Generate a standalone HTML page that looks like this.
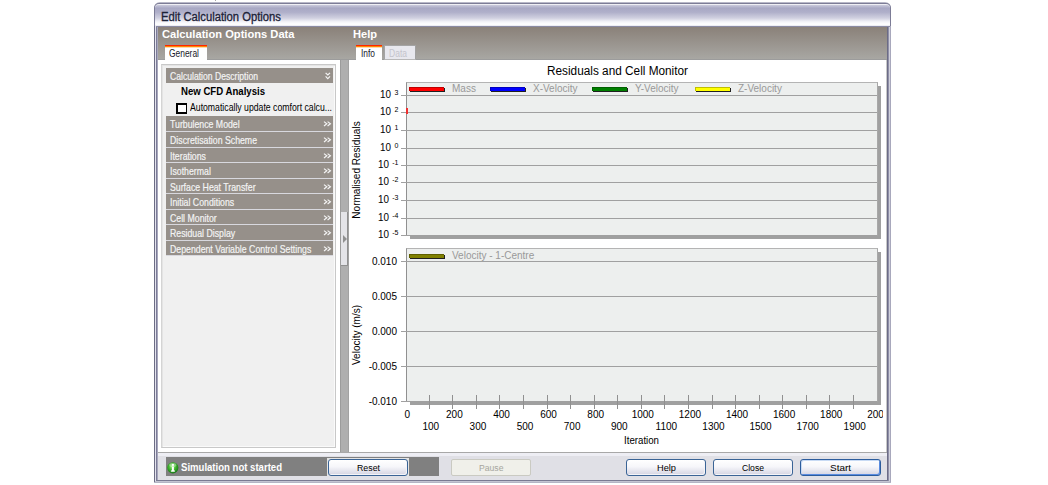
<!DOCTYPE html>
<html><head><meta charset="utf-8"><style>
html,body{margin:0;padding:0;width:1048px;height:485px;overflow:hidden;background:#ffffff;position:relative;font-family:'Liberation Sans', sans-serif;}
</style></head><body>
<div style="position:absolute;left:215px;top:0px;width:1px;height:1px;background:#a8a8a8;"></div>
<div style="position:absolute;left:154px;top:2px;width:737px;height:481px;background:#b8b8c8;border-radius:6px 6px 0 0;"></div>
<div style="position:absolute;left:154px;top:3px;width:737px;height:480px;background:#7c7c96;border-radius:5px 5px 0 0;"></div>
<div style="position:absolute;left:155px;top:4px;width:735px;height:478px;background:#eeeef4;border-radius:4px 4px 0 0;"></div>
<div style="position:absolute;left:155px;top:5px;width:735px;height:21px;background:linear-gradient(#cacadc,#a8a8c4 15%,#b0b0ca 35%,#d0d0e0 62%,#f4f4f8 80%,#ffffff 92%,#e6e6ee);border-radius:3px 3px 0 0;"></div>
<div style="position:absolute;left:155px;top:26px;width:735px;height:1px;background:#8a8aa2;"></div>
<div style="position:absolute;left:154px;top:26px;width:1px;height:456px;background:#6c6c84;"></div>
<div style="position:absolute;left:155px;top:26px;width:1px;height:455px;background:#e4e4ee;"></div>
<div style="position:absolute;left:156px;top:27px;width:1px;height:454px;background:#7c7c98;"></div>
<div style="position:absolute;left:157px;top:27px;width:1px;height:453px;background:#a8a8bc;"></div>
<div style="position:absolute;left:887px;top:27px;width:1px;height:454px;background:#6c6c86;"></div>
<div style="position:absolute;left:888px;top:27px;width:1px;height:454px;background:#9090a8;"></div>
<div style="position:absolute;left:889px;top:27px;width:1px;height:455px;background:#d0d0dc;"></div>
<div style="position:absolute;left:890px;top:26px;width:1px;height:456px;background:#a8a8bc;"></div>
<div style="position:absolute;left:158px;top:456px;width:729px;height:24px;background:#e0e0e6;"></div>
<div style="position:absolute;left:156px;top:480px;width:732px;height:1px;background:#7a7a92;"></div>
<div style="position:absolute;left:155px;top:481px;width:735px;height:1px;background:#c4c4d2;"></div>
<div style="position:absolute;left:154px;top:482px;width:737px;height:1px;background:#b4b4c4;"></div>
<div style="position:absolute;left:158px;top:27px;width:729px;height:33px;background:linear-gradient(#8a8179,#a9a8a4);"></div>
<div style="position:absolute;left:158px;top:59px;width:729px;height:1px;background:#9c9c9c;"></div>
<div style="position:absolute;left:165px;top:45px;width:42px;height:15px;background:#ffffff;"></div>
<div style="position:absolute;left:165px;top:45px;width:42px;height:1px;background:#ff2400;"></div>
<div style="position:absolute;left:165px;top:46px;width:42px;height:1px;background:#ff8800;"></div>
<div style="position:absolute;left:165px;top:47px;width:42px;height:1px;background:#ffd8b0;"></div>
<div style="position:absolute;left:356px;top:45px;width:26px;height:15px;background:#ffffff;"></div>
<div style="position:absolute;left:356px;top:45px;width:26px;height:1px;background:#ff2400;"></div>
<div style="position:absolute;left:356px;top:46px;width:26px;height:1px;background:#ff8800;"></div>
<div style="position:absolute;left:356px;top:47px;width:26px;height:1px;background:#ffd8b0;"></div>
<div style="position:absolute;left:384px;top:45px;width:32px;height:15px;background:#e8e8ee;box-sizing:border-box;border-left:1px solid #a4a4a4;border-top:1px solid #a4a4a4;border-right:1px solid #a0a0a0;border-bottom:1px solid #b8b8b8;"></div>
<div style="position:absolute;left:158px;top:60px;width:182px;height:392px;background:#ffffff;"></div>
<div style="position:absolute;left:161px;top:64px;width:175px;height:384px;background:#f0f0f0;box-sizing:border-box;border:1px solid #c8c8c8;border-left-color:#d4d4d4;box-shadow:inset 1px 1px 0 #e4e4e4, inset -1px -1px 0 #fafafa;"></div>
<div style="position:absolute;left:340px;top:60px;width:9px;height:392px;background:#afafaf;border-left:1px solid #9c9c9c;border-right:1px solid #a2a2a2;box-sizing:border-box;"></div>
<div style="position:absolute;left:341px;top:212px;width:7px;height:54px;background:#e4e4e8;box-sizing:border-box;border-right:1px solid #909090;border-bottom:1px solid #909090;"></div>
<svg style="position:absolute;left:343px;top:235px" width="5" height="8"><path d="M0 0 L4 4 L0 8Z" fill="#909090"/></svg>
<div style="position:absolute;left:349px;top:60px;width:537px;height:392px;background:#ffffff;"></div>
<div style="position:absolute;left:886px;top:60px;width:1px;height:393px;background:#c8c8c8;"></div>
<div style="position:absolute;left:158px;top:452px;width:729px;height:1px;background:#a8a8a8;"></div>
<div style="position:absolute;left:166px;top:68px;width:167px;height:15px;background:#96908a;"></div>
<svg style="position:absolute;left:325px;top:72px" width="6" height="8"><path d="M0.6 0.8 L2.8 3 L5 0.8 M0.6 4.4 L2.8 6.6 L5 4.4" stroke="#f4f4f4" stroke-width="1.2" fill="none"/></svg>
<div style="position:absolute;left:176px;top:103px;width:11px;height:11px;background:#fff;box-sizing:border-box;border:2px solid #000;border-right-width:1.6px;"></div>
<div style="position:absolute;left:166px;top:116px;width:167px;height:15px;background:#96908a;"></div>
<div style="position:absolute;left:166px;top:131px;width:167px;height:1px;background:#d8d8de;"></div>
<svg style="position:absolute;left:323px;top:121px" width="9" height="6"><path d="M1 0.6 L3.8 2.8 L1 5 M4.6 0.6 L7.4 2.8 L4.6 5" stroke="#f4f4f4" stroke-width="1.2" fill="none"/></svg>
<div style="position:absolute;left:166px;top:132px;width:167px;height:15px;background:#96908a;"></div>
<div style="position:absolute;left:166px;top:147px;width:167px;height:1px;background:#d8d8de;"></div>
<svg style="position:absolute;left:323px;top:137px" width="9" height="6"><path d="M1 0.6 L3.8 2.8 L1 5 M4.6 0.6 L7.4 2.8 L4.6 5" stroke="#f4f4f4" stroke-width="1.2" fill="none"/></svg>
<div style="position:absolute;left:166px;top:148px;width:167px;height:14px;background:#96908a;"></div>
<div style="position:absolute;left:166px;top:162px;width:167px;height:1px;background:#d8d8de;"></div>
<svg style="position:absolute;left:323px;top:153px" width="9" height="6"><path d="M1 0.6 L3.8 2.8 L1 5 M4.6 0.6 L7.4 2.8 L4.6 5" stroke="#f4f4f4" stroke-width="1.2" fill="none"/></svg>
<div style="position:absolute;left:166px;top:163px;width:167px;height:15px;background:#96908a;"></div>
<div style="position:absolute;left:166px;top:178px;width:167px;height:1px;background:#d8d8de;"></div>
<svg style="position:absolute;left:323px;top:168px" width="9" height="6"><path d="M1 0.6 L3.8 2.8 L1 5 M4.6 0.6 L7.4 2.8 L4.6 5" stroke="#f4f4f4" stroke-width="1.2" fill="none"/></svg>
<div style="position:absolute;left:166px;top:179px;width:167px;height:14px;background:#96908a;"></div>
<div style="position:absolute;left:166px;top:193px;width:167px;height:1px;background:#d8d8de;"></div>
<svg style="position:absolute;left:323px;top:184px" width="9" height="6"><path d="M1 0.6 L3.8 2.8 L1 5 M4.6 0.6 L7.4 2.8 L4.6 5" stroke="#f4f4f4" stroke-width="1.2" fill="none"/></svg>
<div style="position:absolute;left:166px;top:194px;width:167px;height:15px;background:#96908a;"></div>
<div style="position:absolute;left:166px;top:209px;width:167px;height:1px;background:#d8d8de;"></div>
<svg style="position:absolute;left:323px;top:199px" width="9" height="6"><path d="M1 0.6 L3.8 2.8 L1 5 M4.6 0.6 L7.4 2.8 L4.6 5" stroke="#f4f4f4" stroke-width="1.2" fill="none"/></svg>
<div style="position:absolute;left:166px;top:210px;width:167px;height:14px;background:#96908a;"></div>
<div style="position:absolute;left:166px;top:224px;width:167px;height:1px;background:#d8d8de;"></div>
<svg style="position:absolute;left:323px;top:215px" width="9" height="6"><path d="M1 0.6 L3.8 2.8 L1 5 M4.6 0.6 L7.4 2.8 L4.6 5" stroke="#f4f4f4" stroke-width="1.2" fill="none"/></svg>
<div style="position:absolute;left:166px;top:225px;width:167px;height:15px;background:#96908a;"></div>
<div style="position:absolute;left:166px;top:240px;width:167px;height:1px;background:#d8d8de;"></div>
<svg style="position:absolute;left:323px;top:230px" width="9" height="6"><path d="M1 0.6 L3.8 2.8 L1 5 M4.6 0.6 L7.4 2.8 L4.6 5" stroke="#f4f4f4" stroke-width="1.2" fill="none"/></svg>
<div style="position:absolute;left:166px;top:241px;width:167px;height:14px;background:#96908a;"></div>
<div style="position:absolute;left:166px;top:255px;width:167px;height:1px;background:#d8d8de;"></div>
<svg style="position:absolute;left:323px;top:246px" width="9" height="6"><path d="M1 0.6 L3.8 2.8 L1 5 M4.6 0.6 L7.4 2.8 L4.6 5" stroke="#f4f4f4" stroke-width="1.2" fill="none"/></svg>
<div style="position:absolute;left:166px;top:457px;width:273px;height:19px;background:#808080;"></div>
<svg style="position:absolute;left:167px;top:462px" width="12" height="12"><defs><radialGradient id="g" cx="45%" cy="40%" r="60%"><stop offset="0" stop-color="#9af07a"/><stop offset="0.55" stop-color="#3cb02c"/><stop offset="1" stop-color="#187818"/></radialGradient></defs><circle cx="5.8" cy="5.8" r="5.6" fill="url(#g)"/><ellipse cx="5.8" cy="3" rx="3.6" ry="2" fill="#ffffff" opacity="0.35"/><rect x="4.9" y="2" width="2" height="1.8" fill="#fff"/><rect x="4.9" y="4.6" width="2" height="4.6" fill="#fff"/><rect x="3.9" y="8.4" width="4" height="1.3" fill="#fff"/></svg>
<div style="position:absolute;left:327px;top:458px;width:82px;height:18px;background:#e4e4e4;"></div>
<div style="position:absolute;left:328px;top:459px;width:80px;height:17px;background:linear-gradient(#ffffff,#f6f6fa 45%,#d4d4e2);box-sizing:border-box;border:1px solid #3a6496;border-radius:3px;box-shadow:inset -1px -1px 0 #f4f4f8;"></div>
<div style="position:absolute;left:451px;top:459px;width:80px;height:17px;background:#f0f0ea;box-sizing:border-box;border:1px solid #cacac2;border-radius:2px;"></div>
<div style="position:absolute;left:626px;top:459px;width:80px;height:17px;background:linear-gradient(#ffffff,#f6f6fa 45%,#d4d4e2);box-sizing:border-box;border:1px solid #3a6496;border-radius:3px;box-shadow:inset -1px -1px 0 #f4f4f8;"></div>
<div style="position:absolute;left:713px;top:459px;width:80px;height:17px;background:linear-gradient(#ffffff,#f6f6fa 45%,#d4d4e2);box-sizing:border-box;border:1px solid #3a6496;border-radius:3px;box-shadow:inset -1px -1px 0 #f4f4f8;"></div>
<div style="position:absolute;left:800px;top:459px;width:81px;height:17px;background:linear-gradient(#ffffff,#f6f6fa 45%,#d4d4e2);box-sizing:border-box;border:1px solid #2c5c9c;border-radius:3px;box-shadow:inset -1px -1px 0 #5a8ce0, inset 1px 1px 0 #c8daf4;"></div>
<div style="position:absolute;left:878px;top:86px;width:3px;height:153px;background:#a0a0a0;"></div>
<div style="position:absolute;left:410px;top:236px;width:471px;height:3px;background:#a0a0a0;"></div>
<div style="position:absolute;left:406px;top:82px;width:472px;height:154px;background:#edefee;box-sizing:border-box;border-left:1px solid #909090;border-top:1px solid #b4b4b4;border-right:1px solid #a8a8a8;border-bottom:1px solid #a0a0a0;"></div>
<div style="position:absolute;left:401px;top:95px;width:476px;height:1px;background:#a0a0a0;"></div>
<div style="position:absolute;left:401px;top:112px;width:476px;height:1px;background:#a0a0a0;"></div>
<div style="position:absolute;left:401px;top:130px;width:476px;height:1px;background:#a0a0a0;"></div>
<div style="position:absolute;left:401px;top:148px;width:476px;height:1px;background:#a0a0a0;"></div>
<div style="position:absolute;left:401px;top:165px;width:476px;height:1px;background:#a0a0a0;"></div>
<div style="position:absolute;left:401px;top:182px;width:476px;height:1px;background:#a0a0a0;"></div>
<div style="position:absolute;left:401px;top:200px;width:476px;height:1px;background:#a0a0a0;"></div>
<div style="position:absolute;left:401px;top:218px;width:476px;height:1px;background:#a0a0a0;"></div>
<div style="position:absolute;left:401px;top:235px;width:476px;height:1px;background:#a0a0a0;"></div>
<div style="position:absolute;left:406px;top:108px;width:2px;height:6px;background:#f03030;"></div>
<div style="position:absolute;left:410px;top:88px;width:35px;height:4px;background:#202020;"></div>
<div style="position:absolute;left:409px;top:87px;width:35px;height:4px;background:#ff0000;box-shadow:inset 1px 1px 0 rgba(0,0,0,0.25);"></div>
<div style="position:absolute;left:491px;top:88px;width:35px;height:4px;background:#202020;"></div>
<div style="position:absolute;left:490px;top:87px;width:35px;height:4px;background:#0000ff;box-shadow:inset 1px 1px 0 rgba(0,0,0,0.25);"></div>
<div style="position:absolute;left:593px;top:88px;width:35px;height:4px;background:#202020;"></div>
<div style="position:absolute;left:592px;top:87px;width:35px;height:4px;background:#008000;box-shadow:inset 1px 1px 0 rgba(0,0,0,0.25);"></div>
<div style="position:absolute;left:696px;top:88px;width:35px;height:4px;background:#202020;"></div>
<div style="position:absolute;left:695px;top:87px;width:35px;height:4px;background:#ffff00;box-shadow:inset 1px 1px 0 rgba(0,0,0,0.25);"></div>
<div style="position:absolute;left:878px;top:252px;width:3px;height:153px;background:#a0a0a0;"></div>
<div style="position:absolute;left:410px;top:402px;width:471px;height:3px;background:#a0a0a0;"></div>
<div style="position:absolute;left:406px;top:248px;width:472px;height:154px;background:#edefee;box-sizing:border-box;border-left:1px solid #909090;border-top:1px solid #b4b4b4;border-right:1px solid #a8a8a8;border-bottom:1px solid #a0a0a0;"></div>
<div style="position:absolute;left:401px;top:261px;width:476px;height:1px;background:#a0a0a0;"></div>
<div style="position:absolute;left:401px;top:296px;width:476px;height:1px;background:#a0a0a0;"></div>
<div style="position:absolute;left:401px;top:331px;width:476px;height:1px;background:#a0a0a0;"></div>
<div style="position:absolute;left:401px;top:366px;width:476px;height:1px;background:#a0a0a0;"></div>
<div style="position:absolute;left:401px;top:401px;width:476px;height:1px;background:#a0a0a0;"></div>
<div style="position:absolute;left:410px;top:255px;width:35px;height:4px;background:#202020;"></div>
<div style="position:absolute;left:409px;top:254px;width:35px;height:4px;background:#808000;box-shadow:inset 1px 1px 0 rgba(0,0,0,0.25);"></div>
<div style="position:absolute;left:429px;top:395px;width:1px;height:14px;background:#909090;"></div>
<div style="position:absolute;left:452px;top:395px;width:1px;height:14px;background:#909090;"></div>
<div style="position:absolute;left:476px;top:395px;width:1px;height:14px;background:#909090;"></div>
<div style="position:absolute;left:499px;top:395px;width:1px;height:14px;background:#909090;"></div>
<div style="position:absolute;left:523px;top:395px;width:1px;height:14px;background:#909090;"></div>
<div style="position:absolute;left:547px;top:395px;width:1px;height:14px;background:#909090;"></div>
<div style="position:absolute;left:570px;top:395px;width:1px;height:14px;background:#909090;"></div>
<div style="position:absolute;left:594px;top:395px;width:1px;height:14px;background:#909090;"></div>
<div style="position:absolute;left:617px;top:395px;width:1px;height:14px;background:#909090;"></div>
<div style="position:absolute;left:641px;top:395px;width:1px;height:14px;background:#909090;"></div>
<div style="position:absolute;left:664px;top:395px;width:1px;height:14px;background:#909090;"></div>
<div style="position:absolute;left:688px;top:395px;width:1px;height:14px;background:#909090;"></div>
<div style="position:absolute;left:712px;top:395px;width:1px;height:14px;background:#909090;"></div>
<div style="position:absolute;left:735px;top:395px;width:1px;height:14px;background:#909090;"></div>
<div style="position:absolute;left:759px;top:395px;width:1px;height:14px;background:#909090;"></div>
<div style="position:absolute;left:782px;top:395px;width:1px;height:14px;background:#909090;"></div>
<div style="position:absolute;left:806px;top:395px;width:1px;height:14px;background:#909090;"></div>
<div style="position:absolute;left:829px;top:395px;width:1px;height:14px;background:#909090;"></div>
<div style="position:absolute;left:853px;top:395px;width:1px;height:14px;background:#909090;"></div>
<div style="position:absolute;left:356.5px;top:169.5px;width:0;height:0;"><div style="position:absolute;left:0;top:0;transform:translate(-50%,-50%) rotate(-90deg);white-space:nowrap;font:10px/10px 'Liberation Sans', sans-serif;color:#000;">Normalised Residuals</div></div>
<div style="position:absolute;left:356.5px;top:334.5px;width:0;height:0;"><div style="position:absolute;left:0;top:0;transform:translate(-50%,-50%) rotate(-90deg);white-space:nowrap;font:10px/10px 'Liberation Sans', sans-serif;color:#000;">Velocity (m/s)</div></div>
<div style="position:absolute;left:161.00px;top:10.84px;white-space:pre;font-family:'Liberation Sans', sans-serif;font-size:12px;line-height:12px;font-weight:normal;color:#1c2238;transform:scaleX(0.9369);transform-origin:0 0;-webkit-text-stroke:0.3px #1c2238;">Edit Calculation Options</div>
<div style="position:absolute;left:162.00px;top:29.39px;white-space:pre;font-family:'Liberation Sans', sans-serif;font-size:11px;line-height:11px;font-weight:bold;color:#ffffff;transform:scaleX(1.0130);transform-origin:0 0;">Calculation Options Data</div>
<div style="position:absolute;left:353.00px;top:29.39px;white-space:pre;font-family:'Liberation Sans', sans-serif;font-size:11px;line-height:11px;font-weight:bold;color:#ffffff;transform:scaleX(1.0066);transform-origin:0 0;">Help</div>
<div style="position:absolute;left:169.00px;top:48.03px;white-space:pre;font-family:'Liberation Sans', sans-serif;font-size:10.6px;line-height:10.6px;font-weight:normal;color:#1a1a2a;transform:scaleX(0.7957);transform-origin:0 0;">General</div>
<div style="position:absolute;left:361.00px;top:48.03px;white-space:pre;font-family:'Liberation Sans', sans-serif;font-size:10.6px;line-height:10.6px;font-weight:normal;color:#1a1a2a;transform:scaleX(0.7922);transform-origin:0 0;">Info</div>
<div style="position:absolute;left:389.00px;top:48.03px;white-space:pre;font-family:'Liberation Sans', sans-serif;font-size:10.6px;line-height:10.6px;font-weight:normal;color:#c4c4cc;transform:scaleX(0.8039);transform-origin:0 0;">Data</div>
<div style="position:absolute;left:170.00px;top:70.86px;white-space:pre;font-family:'Liberation Sans', sans-serif;font-size:10.8px;line-height:10.8px;font-weight:normal;color:#f4f4f4;transform:scaleX(0.7969);transform-origin:0 0;-webkit-text-stroke:0.2px #f4f4f4;">Calculation Description</div>
<div style="position:absolute;left:181.00px;top:86.83px;white-space:pre;font-family:'Liberation Sans', sans-serif;font-size:10px;line-height:10px;font-weight:bold;color:#000000;transform:scaleX(0.9607);transform-origin:0 0;">New CFD Analysis</div>
<div style="position:absolute;left:190.00px;top:103.33px;white-space:pre;font-family:'Liberation Sans', sans-serif;font-size:10px;line-height:10px;font-weight:normal;color:#000000;transform:scaleX(0.8689);transform-origin:0 0;">Automatically update comfort calcu...</div>
<div style="position:absolute;left:170.00px;top:118.86px;white-space:pre;font-family:'Liberation Sans', sans-serif;font-size:10.8px;line-height:10.8px;font-weight:normal;color:#f4f4f4;transform:scaleX(0.8100);transform-origin:0 0;-webkit-text-stroke:0.2px #f4f4f4;">Turbulence Model</div>
<div style="position:absolute;left:170.00px;top:134.86px;white-space:pre;font-family:'Liberation Sans', sans-serif;font-size:10.8px;line-height:10.8px;font-weight:normal;color:#f4f4f4;transform:scaleX(0.8100);transform-origin:0 0;-webkit-text-stroke:0.2px #f4f4f4;">Discretisation Scheme</div>
<div style="position:absolute;left:170.00px;top:150.86px;white-space:pre;font-family:'Liberation Sans', sans-serif;font-size:10.8px;line-height:10.8px;font-weight:normal;color:#f4f4f4;transform:scaleX(0.8100);transform-origin:0 0;-webkit-text-stroke:0.2px #f4f4f4;">Iterations</div>
<div style="position:absolute;left:170.00px;top:165.86px;white-space:pre;font-family:'Liberation Sans', sans-serif;font-size:10.8px;line-height:10.8px;font-weight:normal;color:#f4f4f4;transform:scaleX(0.8100);transform-origin:0 0;-webkit-text-stroke:0.2px #f4f4f4;">Isothermal</div>
<div style="position:absolute;left:170.00px;top:181.86px;white-space:pre;font-family:'Liberation Sans', sans-serif;font-size:10.8px;line-height:10.8px;font-weight:normal;color:#f4f4f4;transform:scaleX(0.8100);transform-origin:0 0;-webkit-text-stroke:0.2px #f4f4f4;">Surface Heat Transfer</div>
<div style="position:absolute;left:170.00px;top:196.86px;white-space:pre;font-family:'Liberation Sans', sans-serif;font-size:10.8px;line-height:10.8px;font-weight:normal;color:#f4f4f4;transform:scaleX(0.8100);transform-origin:0 0;-webkit-text-stroke:0.2px #f4f4f4;">Initial Conditions</div>
<div style="position:absolute;left:170.00px;top:212.86px;white-space:pre;font-family:'Liberation Sans', sans-serif;font-size:10.8px;line-height:10.8px;font-weight:normal;color:#f4f4f4;transform:scaleX(0.8100);transform-origin:0 0;-webkit-text-stroke:0.2px #f4f4f4;">Cell Monitor</div>
<div style="position:absolute;left:170.00px;top:227.86px;white-space:pre;font-family:'Liberation Sans', sans-serif;font-size:10.8px;line-height:10.8px;font-weight:normal;color:#f4f4f4;transform:scaleX(0.8100);transform-origin:0 0;-webkit-text-stroke:0.2px #f4f4f4;">Residual Display</div>
<div style="position:absolute;left:170.00px;top:243.86px;white-space:pre;font-family:'Liberation Sans', sans-serif;font-size:10.8px;line-height:10.8px;font-weight:normal;color:#f4f4f4;transform:scaleX(0.8100);transform-origin:0 0;-webkit-text-stroke:0.2px #f4f4f4;">Dependent Variable Control Settings</div>
<div style="position:absolute;left:181.00px;top:462.54px;white-space:pre;font-family:'Liberation Sans', sans-serif;font-size:10px;line-height:10px;font-weight:bold;color:#ffffff;transform:scaleX(0.9568);transform-origin:0 0;">Simulation not started</div>
<div style="position:absolute;left:356.50px;top:463.17px;white-space:pre;font-family:'Liberation Sans', sans-serif;font-size:9.6px;line-height:9.6px;font-weight:normal;color:#000000;transform:scaleX(0.9177);transform-origin:0 0;">Reset</div>
<div style="position:absolute;left:478.75px;top:463.17px;white-space:pre;font-family:'Liberation Sans', sans-serif;font-size:9.6px;line-height:9.6px;font-weight:normal;color:#a6a69e;transform:scaleX(0.9006);transform-origin:0 0;">Pause</div>
<div style="position:absolute;left:656.50px;top:463.17px;white-space:pre;font-family:'Liberation Sans', sans-serif;font-size:9.6px;line-height:9.6px;font-weight:normal;color:#000000;transform:scaleX(0.9628);transform-origin:0 0;">Help</div>
<div style="position:absolute;left:742.00px;top:463.17px;white-space:pre;font-family:'Liberation Sans', sans-serif;font-size:9.6px;line-height:9.6px;font-weight:normal;color:#000000;transform:scaleX(0.8968);transform-origin:0 0;">Close</div>
<div style="position:absolute;left:830.00px;top:463.17px;white-space:pre;font-family:'Liberation Sans', sans-serif;font-size:9.6px;line-height:9.6px;font-weight:normal;color:#000000;transform:scaleX(1.0362);transform-origin:0 0;">Start</div>
<div style="position:absolute;left:547.00px;top:64.84px;white-space:pre;font-family:'Liberation Sans', sans-serif;font-size:12px;line-height:12px;font-weight:normal;color:#000000;transform:scaleX(0.9832);transform-origin:0 0;">Residuals and Cell Monitor</div>
<div style="position:absolute;left:394.59px;top:89.07px;white-space:pre;font-family:'Liberation Sans', sans-serif;font-size:7px;line-height:7px;font-weight:normal;color:#000000;">3</div>
<div style="position:absolute;left:380.00px;top:89.11px;white-space:pre;font-family:'Liberation Sans', sans-serif;font-size:10.5px;line-height:10.5px;font-weight:normal;color:#000000;transform:scaleX(0.9412);transform-origin:0 0;">10</div>
<div style="position:absolute;left:394.59px;top:106.07px;white-space:pre;font-family:'Liberation Sans', sans-serif;font-size:7px;line-height:7px;font-weight:normal;color:#000000;">2</div>
<div style="position:absolute;left:380.00px;top:106.11px;white-space:pre;font-family:'Liberation Sans', sans-serif;font-size:10.5px;line-height:10.5px;font-weight:normal;color:#000000;transform:scaleX(0.9412);transform-origin:0 0;">10</div>
<div style="position:absolute;left:394.59px;top:124.07px;white-space:pre;font-family:'Liberation Sans', sans-serif;font-size:7px;line-height:7px;font-weight:normal;color:#000000;">1</div>
<div style="position:absolute;left:380.00px;top:124.11px;white-space:pre;font-family:'Liberation Sans', sans-serif;font-size:10.5px;line-height:10.5px;font-weight:normal;color:#000000;transform:scaleX(0.9412);transform-origin:0 0;">10</div>
<div style="position:absolute;left:394.59px;top:142.07px;white-space:pre;font-family:'Liberation Sans', sans-serif;font-size:7px;line-height:7px;font-weight:normal;color:#000000;">0</div>
<div style="position:absolute;left:380.00px;top:142.11px;white-space:pre;font-family:'Liberation Sans', sans-serif;font-size:10.5px;line-height:10.5px;font-weight:normal;color:#000000;transform:scaleX(0.9412);transform-origin:0 0;">10</div>
<div style="position:absolute;left:392.27px;top:159.07px;white-space:pre;font-family:'Liberation Sans', sans-serif;font-size:7px;line-height:7px;font-weight:normal;color:#000000;">-1</div>
<div style="position:absolute;left:377.70px;top:159.11px;white-space:pre;font-family:'Liberation Sans', sans-serif;font-size:10.5px;line-height:10.5px;font-weight:normal;color:#000000;transform:scaleX(0.9412);transform-origin:0 0;">10</div>
<div style="position:absolute;left:392.27px;top:176.07px;white-space:pre;font-family:'Liberation Sans', sans-serif;font-size:7px;line-height:7px;font-weight:normal;color:#000000;">-2</div>
<div style="position:absolute;left:377.70px;top:176.11px;white-space:pre;font-family:'Liberation Sans', sans-serif;font-size:10.5px;line-height:10.5px;font-weight:normal;color:#000000;transform:scaleX(0.9412);transform-origin:0 0;">10</div>
<div style="position:absolute;left:392.27px;top:194.07px;white-space:pre;font-family:'Liberation Sans', sans-serif;font-size:7px;line-height:7px;font-weight:normal;color:#000000;">-3</div>
<div style="position:absolute;left:377.70px;top:194.11px;white-space:pre;font-family:'Liberation Sans', sans-serif;font-size:10.5px;line-height:10.5px;font-weight:normal;color:#000000;transform:scaleX(0.9412);transform-origin:0 0;">10</div>
<div style="position:absolute;left:392.27px;top:212.07px;white-space:pre;font-family:'Liberation Sans', sans-serif;font-size:7px;line-height:7px;font-weight:normal;color:#000000;">-4</div>
<div style="position:absolute;left:377.70px;top:212.11px;white-space:pre;font-family:'Liberation Sans', sans-serif;font-size:10.5px;line-height:10.5px;font-weight:normal;color:#000000;transform:scaleX(0.9412);transform-origin:0 0;">10</div>
<div style="position:absolute;left:392.27px;top:229.07px;white-space:pre;font-family:'Liberation Sans', sans-serif;font-size:7px;line-height:7px;font-weight:normal;color:#000000;">-5</div>
<div style="position:absolute;left:377.70px;top:229.11px;white-space:pre;font-family:'Liberation Sans', sans-serif;font-size:10.5px;line-height:10.5px;font-weight:normal;color:#000000;transform:scaleX(0.9412);transform-origin:0 0;">10</div>
<div style="position:absolute;left:452.00px;top:84.03px;white-space:pre;font-family:'Liberation Sans', sans-serif;font-size:10px;line-height:10px;font-weight:normal;color:#999999;">Mass</div>
<div style="position:absolute;left:533.00px;top:84.03px;white-space:pre;font-family:'Liberation Sans', sans-serif;font-size:10px;line-height:10px;font-weight:normal;color:#999999;">X-Velocity</div>
<div style="position:absolute;left:635.00px;top:84.03px;white-space:pre;font-family:'Liberation Sans', sans-serif;font-size:10px;line-height:10px;font-weight:normal;color:#999999;">Y-Velocity</div>
<div style="position:absolute;left:738.00px;top:84.03px;white-space:pre;font-family:'Liberation Sans', sans-serif;font-size:10px;line-height:10px;font-weight:normal;color:#999999;">Z-Velocity</div>
<div style="position:absolute;left:371.97px;top:256.54px;white-space:pre;font-family:'Liberation Sans', sans-serif;font-size:10px;line-height:10px;font-weight:normal;color:#000000;">0.010</div>
<div style="position:absolute;left:371.97px;top:291.54px;white-space:pre;font-family:'Liberation Sans', sans-serif;font-size:10px;line-height:10px;font-weight:normal;color:#000000;">0.005</div>
<div style="position:absolute;left:371.97px;top:326.54px;white-space:pre;font-family:'Liberation Sans', sans-serif;font-size:10px;line-height:10px;font-weight:normal;color:#000000;">0.000</div>
<div style="position:absolute;left:368.64px;top:361.54px;white-space:pre;font-family:'Liberation Sans', sans-serif;font-size:10px;line-height:10px;font-weight:normal;color:#000000;">-0.005</div>
<div style="position:absolute;left:368.64px;top:396.54px;white-space:pre;font-family:'Liberation Sans', sans-serif;font-size:10px;line-height:10px;font-weight:normal;color:#000000;">-0.010</div>
<div style="position:absolute;left:452.00px;top:251.03px;white-space:pre;font-family:'Liberation Sans', sans-serif;font-size:10px;line-height:10px;font-weight:normal;color:#999999;">Velocity - 1-Centre</div>
<div style="position:absolute;left:404.52px;top:409.54px;white-space:pre;font-family:'Liberation Sans', sans-serif;font-size:10px;line-height:10px;font-weight:normal;color:#000000;">0</div>
<div style="position:absolute;left:422.51px;top:421.54px;white-space:pre;font-family:'Liberation Sans', sans-serif;font-size:10px;line-height:10px;font-weight:normal;color:#000000;">100</div>
<div style="position:absolute;left:446.06px;top:409.54px;white-space:pre;font-family:'Liberation Sans', sans-serif;font-size:10px;line-height:10px;font-weight:normal;color:#000000;">200</div>
<div style="position:absolute;left:469.61px;top:421.54px;white-space:pre;font-family:'Liberation Sans', sans-serif;font-size:10px;line-height:10px;font-weight:normal;color:#000000;">300</div>
<div style="position:absolute;left:493.16px;top:409.54px;white-space:pre;font-family:'Liberation Sans', sans-serif;font-size:10px;line-height:10px;font-weight:normal;color:#000000;">400</div>
<div style="position:absolute;left:516.71px;top:421.54px;white-space:pre;font-family:'Liberation Sans', sans-serif;font-size:10px;line-height:10px;font-weight:normal;color:#000000;">500</div>
<div style="position:absolute;left:540.26px;top:409.54px;white-space:pre;font-family:'Liberation Sans', sans-serif;font-size:10px;line-height:10px;font-weight:normal;color:#000000;">600</div>
<div style="position:absolute;left:563.81px;top:421.54px;white-space:pre;font-family:'Liberation Sans', sans-serif;font-size:10px;line-height:10px;font-weight:normal;color:#000000;">700</div>
<div style="position:absolute;left:587.36px;top:409.54px;white-space:pre;font-family:'Liberation Sans', sans-serif;font-size:10px;line-height:10px;font-weight:normal;color:#000000;">800</div>
<div style="position:absolute;left:610.91px;top:421.54px;white-space:pre;font-family:'Liberation Sans', sans-serif;font-size:10px;line-height:10px;font-weight:normal;color:#000000;">900</div>
<div style="position:absolute;left:631.67px;top:409.54px;white-space:pre;font-family:'Liberation Sans', sans-serif;font-size:10px;line-height:10px;font-weight:normal;color:#000000;">1000</div>
<div style="position:absolute;left:655.59px;top:421.54px;white-space:pre;font-family:'Liberation Sans', sans-serif;font-size:10px;line-height:10px;font-weight:normal;color:#000000;">1100</div>
<div style="position:absolute;left:678.78px;top:409.54px;white-space:pre;font-family:'Liberation Sans', sans-serif;font-size:10px;line-height:10px;font-weight:normal;color:#000000;">1200</div>
<div style="position:absolute;left:702.33px;top:421.54px;white-space:pre;font-family:'Liberation Sans', sans-serif;font-size:10px;line-height:10px;font-weight:normal;color:#000000;">1300</div>
<div style="position:absolute;left:725.88px;top:409.54px;white-space:pre;font-family:'Liberation Sans', sans-serif;font-size:10px;line-height:10px;font-weight:normal;color:#000000;">1400</div>
<div style="position:absolute;left:749.42px;top:421.54px;white-space:pre;font-family:'Liberation Sans', sans-serif;font-size:10px;line-height:10px;font-weight:normal;color:#000000;">1500</div>
<div style="position:absolute;left:772.98px;top:409.54px;white-space:pre;font-family:'Liberation Sans', sans-serif;font-size:10px;line-height:10px;font-weight:normal;color:#000000;">1600</div>
<div style="position:absolute;left:796.53px;top:421.54px;white-space:pre;font-family:'Liberation Sans', sans-serif;font-size:10px;line-height:10px;font-weight:normal;color:#000000;">1700</div>
<div style="position:absolute;left:820.08px;top:409.54px;white-space:pre;font-family:'Liberation Sans', sans-serif;font-size:10px;line-height:10px;font-weight:normal;color:#000000;">1800</div>
<div style="position:absolute;left:843.62px;top:421.54px;white-space:pre;font-family:'Liberation Sans', sans-serif;font-size:10px;line-height:10px;font-weight:normal;color:#000000;">1900</div>
<div style="position:absolute;left:800px;top:400px;width:83.4px;height:40px;overflow:hidden;"><div style="position:absolute;left:67.17px;top:9.54px;white-space:pre;font-family:'Liberation Sans', sans-serif;font-size:10px;line-height:10px;font-weight:normal;color:#000000;">2000</div></div>
<div style="position:absolute;left:624.00px;top:435.54px;white-space:pre;font-family:'Liberation Sans', sans-serif;font-size:10px;line-height:10px;font-weight:normal;color:#000000;transform:scaleX(0.9684);transform-origin:0 0;">Iteration</div>
</body></html>
